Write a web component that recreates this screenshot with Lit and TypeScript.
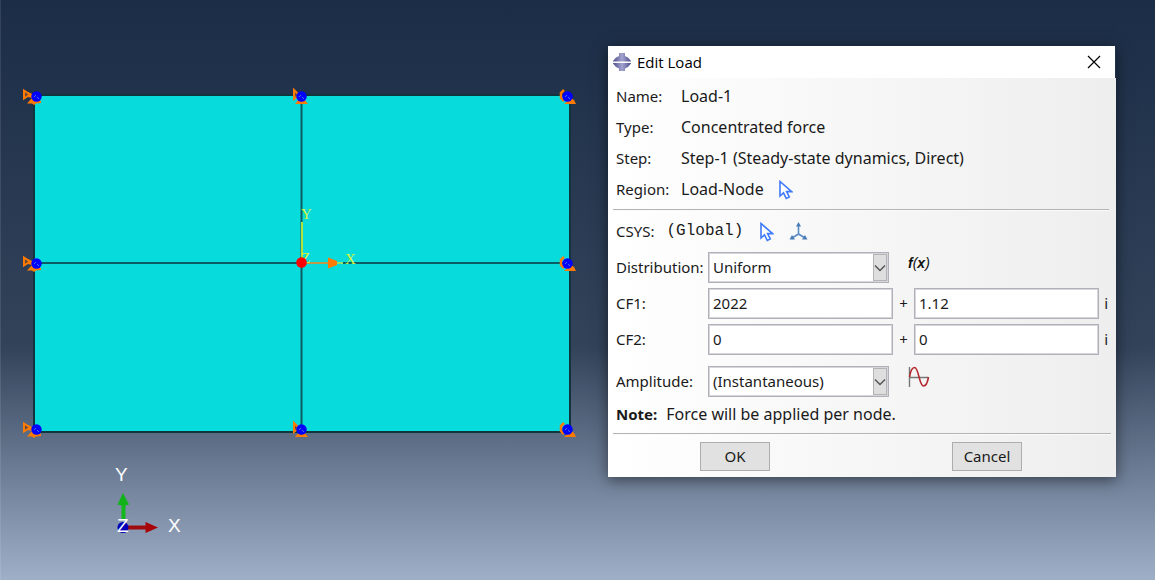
import { LitElement, html, svg, css } from "lit";
import { customElement, state } from "lit/decorators.js";

type MarkerKind = "left" | "mid" | "right";

interface Marker {
  x: number;
  y: number;
  kind: MarkerKind;
}

const MARKERS: Marker[] = [
  { x: 36, y: 96, kind: "left" },
  { x: 301, y: 96, kind: "mid" },
  { x: 567, y: 96, kind: "right" },
  { x: 36, y: 263, kind: "left" },
  { x: 567, y: 263, kind: "right" },
  { x: 36, y: 429, kind: "left" },
  { x: 301, y: 429, kind: "mid" },
  { x: 567, y: 429, kind: "right" },
];

@customElement("model-viewport")
export class ModelViewport extends LitElement {
  static styles = css`
    :host {
      display: block;
      min-width: 0;
    }
    .scene {
      display: block;
      width: 100%;
      height: 560px;
      overflow: visible;
    }
    .datum {
      font: 15px "Liberation Serif", serif;
      fill: #d8f53a;
    }
    .triad {
      font: 19px "Liberation Sans", sans-serif;
      fill: #fff;
    }
  `;

  private cones(kind: MarkerKind) {
    if (kind === "left") {
      return svg`
        <path d="M-12 -5.500V2.500L-6 -1.500Z" fill="#6b4a3a" stroke="#ff7a00" stroke-width="2"/>
        <path d="M-8 -4L-4 -2V2L-8 1Z" fill="#ff7a00"/>
        <path d="M-9 7.500L-4 2L5 5V7L0 7.500L-2 9L-4 7.500Z" fill="#ff7a00"/>`;
    }
    if (kind === "mid") {
      return svg`
        <path d="M-7 -6V3L-2 -1Z" fill="#6b4a3a" stroke="#ff7a00" stroke-width="2"/>
        <path d="M-6 8L-2 3H3L7 8Z" fill="#ff7a00"/>`;
    }
    return svg`
      <path d="M-3 -6L-6 -3V2L-3 5" fill="none" stroke="#ff7a00" stroke-width="2.500"/>
      <path d="M-3 8L4 2L7 4L9 8Z" fill="#ff7a00"/>`;
  }

  render() {
    return html`
      <svg class="scene" role="img" aria-label="Plate model with boundary conditions">
        <rect x="34" y="95" width="536" height="337" fill="#08dbdb" stroke="#10353f" stroke-width="2"/>
        <path d="M301.5 95V432M34 263H570" stroke="#0b5c63" stroke-width="2" fill="none"/>
        ${MARKERS.map(
          (m) => svg`
            <g transform="translate(${m.x} ${m.y})">
              ${this.cones(m.kind)}
              <circle cx="0.5" cy="0.5" r="5.2" fill="#0000ff"/>
              <path d="M-2 1L0 -1M1 1L3 3" stroke="#3c7be0" stroke-width="1"/>
            </g>`
        )}
        <path d="M302 222V258" stroke="#b4e03a" stroke-width="2"/>
        <path d="M336 263H343" stroke="#8fe36a" stroke-width="2"/>
        <path d="M306 263H329" stroke="#c09a46" stroke-width="2"/>
        <path d="M328 257.5L337 261V265L328 268.5Z" fill="#ff7a00"/>
        <text class="datum" x="301" y="219">Y</text>
        <text class="datum" x="301" y="263">Z</text>
        <text class="datum" x="345" y="264">X</text>
        <circle cx="301.5" cy="262.5" r="5.3" fill="#ff0000"/>
        <path d="M123.500 502V520" stroke="#10b818" stroke-width="4"/>
        <path d="M117.500 504.500L123 493L129 504.500Q123 506.500 117.500 504.500Z" fill="#12b31a"/>
        <path d="M128 527.500H147" stroke="#a00b10" stroke-width="4"/>
        <path d="M145.500 522L158 527.500L145.500 533Z" fill="#a80508"/>
        <circle cx="123" cy="527.500" r="5.500" fill="#0000b8"/>
        <text class="triad" x="115" y="481">Y</text>
        <text class="triad" x="117" y="532">Z</text>
        <text class="triad" x="168" y="532">X</text>
      </svg>
    `;
  }
}

@customElement("edit-load-dialog")
export class EditLoadDialog extends LitElement {
  static styles = css`
    :host {
      display: block;
      color: #1a1a1a;
      font: 15px/20px "Noto Sans", "Open Sans", sans-serif;
      box-shadow: 0 3px 14px rgba(0, 0, 0, 0.5);
    }
    * {
      box-sizing: border-box;
    }
    button,
    input,
    select {
      font: inherit;
      color: inherit;
      margin: 0;
      border-radius: 0;
    }
    svg {
      display: block;
    }
    .titlebar {
      display: flex;
      align-items: center;
      gap: 6px;
      height: 32px;
      margin-right: 1px;
      padding: 0 14px 1px 5px;
      background: #fff;
    }
    .title {
      flex: 1;
      margin: 0;
      font: 15px/20px "Open Sans", sans-serif;
      color: #000;
    }
    .icon-button {
      display: block;
      padding: 0;
      border: 0;
      background: none;
    }
    .body {
      padding: 4px 5px 6px;
      background: linear-gradient(to right, #fff, #eee);
    }
    .row {
      display: flex;
      align-items: center;
      height: 31px;
      padding: 0 0 2px 3px;
    }
    .facts {
      margin: 0;
    }
    .facts .row {
      padding-bottom: 4px;
    }
    .key {
      width: 65px;
    }
    .value {
      display: flex;
      align-items: center;
      gap: 15px;
      margin: 0;
      font-size: 16px;
    }
    .value .icon-button {
      padding-top: 2px;
    }
    .rule {
      height: 2px;
      margin: 3px 0;
      border: 0;
      border-top: 1px solid #b4b4b4;
      background: #fafafa;
    }
    .top-rule {
      margin: 3px 2px 5px 0;
    }
    .csys {
      gap: 15px;
      margin-bottom: 5px;
    }
    .csys .icon-button {
      padding-top: 2px;
    }
    .mono {
      font: 16px/20px "Liberation Mono", monospace;
      margin: 0 2px 0 -3px;
    }
    .fields {
      display: grid;
      grid-template-columns: 92px 1fr 21px 1fr 12px;
      grid-auto-rows: 31px;
      row-gap: 5px;
      align-items: center;
      padding-left: 3px;
    }
    .fields label,
    .op,
    .unit {
      padding-bottom: 2px;
    }
    .amplitude {
      margin-top: 11px;
    }
    .combo {
      position: relative;
      height: 31px;
      margin-right: 4px;
    }
    .box {
      width: 100%;
      height: 31px;
      padding: 0 4px 2px;
      border: 1px solid #b0b0b8;
      box-shadow: inset 0 0 0 1px #d6d6dc;
      background: #fff;
      outline: 0;
    }
    select.box {
      appearance: none;
      padding-right: 18px;
    }
    .arrow {
      position: absolute;
      top: 2px;
      right: 2px;
      width: 14px;
      height: 27px;
      display: grid;
      place-items: center;
      border: 1px solid #b4b4b4;
      background: #dedede;
      pointer-events: none;
    }
    .op {
      text-align: center;
    }
    .unit {
      text-align: right;
      padding-right: 3px;
    }
    .side {
      grid-column: 4;
      align-self: start;
      justify-self: start;
      margin-left: -6px;
    }
    .fx {
      font: italic 14px/22px "Liberation Sans", sans-serif;
      color: #111;
    }
    .note {
      gap: 9px;
      margin-top: 3px;
      padding-bottom: 3px;
    }
    .message {
      font-size: 16px;
    }
    .bottom-rule {
      margin: 2px 0 7px;
    }
    .actions {
      display: flex;
      justify-content: space-between;
      padding: 0 89px 0 87px;
    }
    .action {
      width: 70px;
      height: 29px;
      padding: 0 0 2px;
      border: 1px solid #adadad;
      background: #e1e1e1;
      line-height: 20px;
    }
  `;

  @state() private values = { cf1re: "2022", cf1im: "1.12", cf2re: "0", cf2im: "0" };

  private cursorIcon() {
    return html`<svg width="14" height="20" viewBox="0 0 14 20" fill="#fff" stroke="#3f7bfa" stroke-width="1.600" aria-hidden="true">
      <path d="M1 1.500V16L4.500 12.800L7.300 18.500L10.300 17L7.600 11.600H12.600Z" />
    </svg>`;
  }

  private chevron() {
    return html`<span class="arrow" aria-hidden="true">
      <svg width="12" height="8" viewBox="0 0 12 8" fill="none" stroke="#555" stroke-width="1.500">
        <path d="M1 1.500L6 6.500L11 1.500" />
      </svg>
    </span>`;
  }

  private component(label: string, re: string, im: string, id: string) {
    return html`
      <label for="${id}-re">${label}</label>
      <input class="box" id="${id}-re" .value=${re} />
      <span class="op">+</span>
      <input class="box" id="${id}-im" aria-label="${label} imaginary part" .value=${im} />
      <span class="unit">i</span>
    `;
  }

  render() {
    const v = this.values;
    return html`
      <header class="titlebar">
        <svg width="18" height="18" viewBox="0 0 18 18" aria-hidden="true">
          <defs>
            <linearGradient id="metal">
              <stop offset="0" stop-color="#4c4c8c" />
              <stop offset="0.5" stop-color="#a4a4d0" />
              <stop offset="1" stop-color="#4c4c8c" />
            </linearGradient>
          </defs>
          <path fill="url(#metal)" d="M6 0H12V3L15 4.500L18 8V8.500H0V8L3 4.500L6 3ZM0 10H18V10.500L15 14L12 15.500V18H6V15.500L3 14L0 10.500Z" />
        </svg>
        <h1 class="title">Edit Load</h1>
        <button class="icon-button" aria-label="Close">
          <svg width="14" height="14" viewBox="0 0 14 14" stroke="#000" stroke-width="1.200">
            <path d="M1 1L13 13M13 1L1 13" />
          </svg>
        </button>
      </header>
      <div class="body">
        <dl class="facts">
          <div class="row"><dt class="key">Name:</dt><dd class="value">Load-1</dd></div>
          <div class="row"><dt class="key">Type:</dt><dd class="value">Concentrated force</dd></div>
          <div class="row"><dt class="key">Step:</dt><dd class="value">Step-1 (Steady-state dynamics, Direct)</dd></div>
          <div class="row">
            <dt class="key">Region:</dt>
            <dd class="value">Load-Node <button class="icon-button" aria-label="Edit region">${this.cursorIcon()}</button></dd>
          </div>
        </dl>
        <hr class="rule top-rule" />
        <div class="row csys">
          <span>CSYS:</span>
          <span class="mono">(Global)</span>
          <button class="icon-button" aria-label="Pick coordinate system">${this.cursorIcon()}</button>
          <button class="icon-button" aria-label="Create coordinate system">
            <svg width="19" height="19" viewBox="0 0 19 19" fill="none" stroke="#5b8cc4" stroke-width="1.600">
              <path d="M9.500 3V12L3 16M9.500 12L16 16" />
              <path fill="#4a7db8" stroke="none" d="M9.500 0L12 4.500H7ZM0.500 17.500L3 13L6 17.500ZM18.500 17.500L16 13L13 17.500Z" />
            </svg>
          </button>
        </div>
        <div class="fields">
          <label for="distribution">Distribution:</label>
          <div class="combo">
            <select class="box" id="distribution"><option>Uniform</option></select>
            ${this.chevron()}
          </div>
          <button class="icon-button side fx" aria-label="Create expression field"><b>f</b>(<b>x</b>)</button>
          <span></span>
          ${this.component("CF1:", v.cf1re, v.cf1im, "cf1")}
          ${this.component("CF2:", v.cf2re, v.cf2im, "cf2")}
        </div>
        <div class="fields amplitude">
          <label for="amplitude">Amplitude:</label>
          <div class="combo">
            <select class="box" id="amplitude"><option>(Instantaneous)</option></select>
            ${this.chevron()}
          </div>
          <button class="icon-button side" aria-label="Create amplitude">
            <svg width="22" height="22" viewBox="0 0 22 22" fill="none">
              <path d="M1.500 1V21M1 11.500H20" stroke="#777" stroke-width="1.400" />
              <path d="M1.500 11C2.500 5 4 1.500 6.500 1.500C11 1.500 11 20 15.500 20C18 20 19.500 17 20.500 11" stroke="#b52a30" stroke-width="1.600" />
            </svg>
          </button>
        </div>
        <div class="row note"><b>Note:</b><span class="message">Force will be applied per node.</span></div>
        <hr class="rule bottom-rule" />
        <div class="actions">
          <button class="action">OK</button>
          <button class="action">Cancel</button>
        </div>
      </div>
    `;
  }
}

@customElement("app-root")
export class AppRoot extends LitElement {
  static styles = css`
    :host {
      display: block;
    }
    .workspace {
      display: grid;
      grid-template-columns: minmax(0, 1fr) 508px;
      align-items: start;
      min-height: 100vh;
      padding-right: 39px;
      box-sizing: border-box;
      overflow: hidden;
      background: linear-gradient(to bottom, #1b2d47, #33435a 60%, #9fafc8);
      box-shadow: inset 1px 0 rgba(255, 255, 255, 0.1);
    }
    .dialog {
      margin-top: 46px;
    }
  `;

  render() {
    return html`
      <main class="workspace">
        <model-viewport></model-viewport>
        <edit-load-dialog class="dialog" role="dialog" aria-label="Edit Load"></edit-load-dialog>
      </main>
    `;
  }
}
